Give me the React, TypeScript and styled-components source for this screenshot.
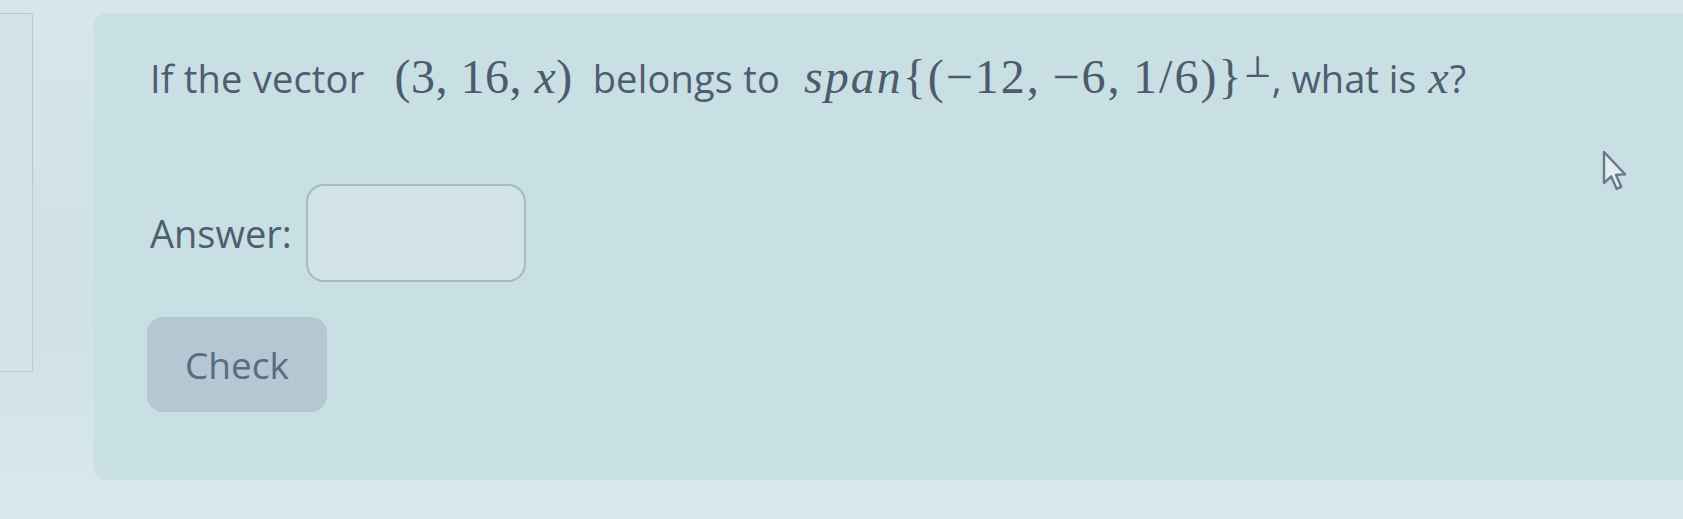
import React from "react";
import styled, { createGlobalStyle } from "styled-components";

const GlobalStyle = createGlobalStyle`
    html, body {
        margin: 0;
        padding: 0;
        background: #d5e5e9;
        overflow: hidden;
    }
    #root {
        width: 1683px;
        height: 519px;
    }
`;

export default function App() {
    return (
        <>
            <GlobalStyle />
            <Page>
                <SideCard />
                <Panel>
                    <Question>
                        If the vector
                        <MathSpan>
                            (3, 16, <Var>x</Var>)
                        </MathSpan>
                        belongs to
                        <MathSpan $spread $tight>
                            <Var>span</Var>
                            {"{(−12,\u2009−6,\u20091/6)}"}
                            <Sup>⊥</Sup>
                        </MathSpan>
                        <Tail>
                            , what is <InlineVar>x</InlineVar>?
                        </Tail>
                    </Question>
                    <AnswerRow>
                        <Label>Answer:</Label>
                        <AnswerInput type="text" aria-label="Answer" />
                    </AnswerRow>
                    <CheckBtn>Check</CheckBtn>
                    <Cursor width="24" height="42" viewBox="0 0 12 21">
                        <path
                            d="M1 1 L1 16.5 L4.6 13.2 L7.3 19.4 L9.6 18.4 L7 12.4 L11.6 12.2 Z"
                            fill="#e3edf0"
                            stroke="#68798b"
                            strokeWidth="1.2"
                            strokeLinejoin="round"
                        />
                    </Cursor>
                </Panel>
            </Page>
        </>
    );
}

export const Page = styled.div`
    display: flex;
    align-items: flex-start;
    gap: 61px;
    width: 1683px;
    height: 519px;
    background: linear-gradient(to bottom, #d6e6ea 0%, #cfe1e6 60%, #d9e9ed 100%);
    font-family: "Open Sans", "Noto Sans", sans-serif;
    color: #4f5d70;
`;

export const SideCard = styled.div`
    width: 33px;
    height: 359px;
    margin-top: 13px;
    box-sizing: border-box;
    background: #d4e3e8;
    border: 1px solid #b7c9d1;
    border-left: none;
    border-radius: 0 3px 3px 0;
`;

export const Panel = styled.div`
    position: relative;
    flex: 1;
    height: 467px;
    margin-top: 13px;
    box-sizing: border-box;
    padding: 36px 0 0 56px;
    background: #c8dfe4;
    border-radius: 12px 0 0 12px;
    display: flex;
    flex-direction: column;
    align-items: flex-start;
`;

export const Question = styled.p`
    margin: 0;
    height: 56px;
    line-height: 56px;
    font-size: 38px;
    letter-spacing: 0.2px;
    color: #4f5d70;
    white-space: nowrap;
`;

export const Tail = styled.span`
    letter-spacing: 0;
`;

export const MathSpan = styled.span<{ $spread?: boolean; $tight?: boolean }>`
    font-family: "Liberation Serif", "DejaVu Serif", serif;
    font-size: 48px;
    color: #4d5b6c;
    letter-spacing: ${(p) => (p.$spread ? "2px" : "0.5px")};
    margin: ${(p) => (p.$tight ? "0 0 0 24px" : "0 20px 0 30px")};
`;

export const Var = styled.i`
    font-style: italic;
`;

export const InlineVar = styled.i`
    font-family: "Liberation Serif", "DejaVu Serif", serif;
    font-size: 46px;
    font-style: italic;
    margin: 0 1px 0 2px;
`;

export const Sup = styled.sup`
    font-size: 30px;
    vertical-align: 16px;
    line-height: 0;
    letter-spacing: 0;
    margin-left: 0;
`;

export const AnswerRow = styled.div`
    display: flex;
    align-items: center;
    gap: 14px;
    margin-top: 79px;
`;

export const Label = styled.span`
    font-size: 38px;
    color: #4f5d70;
`;

export const AnswerInput = styled.input`
    width: 220px;
    height: 98px;
    box-sizing: border-box;
    border: 2px solid #a2bcc6;
    border-radius: 18px;
    background: #d3e4e8;
    outline: none;
`;

export const CheckBtn = styled.button`
    width: 180px;
    height: 95px;
    margin: 35px 0 0 -3px;
    border: none;
    border-radius: 16px;
    background: #b4c8d3;
    color: #5a6c80;
    font-family: "Open Sans", "Noto Sans", sans-serif;
    font-size: 37px;
    cursor: pointer;
`;

export const Cursor = styled.svg`
    position: absolute;
    left: 1508px;
    top: 137px;
`;
